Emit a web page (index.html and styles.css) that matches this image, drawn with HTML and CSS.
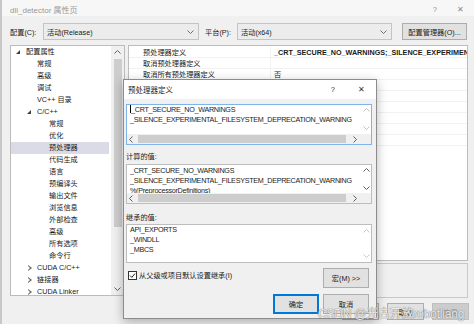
FILE: index.html
```html
<!doctype html>
<html lang="zh-CN">
<head>
  <meta charset="utf-8" />
  <title>dll_detector 属性页</title>
  <link rel="stylesheet" href="styles.css">
</head>
<body>
  <div class="win">
    <div class="titlebar">
      <span class="wtitle">dll_detector 属性页</span>
      <span class="tbtns"><span class="help">?</span><span class="close">✕</span></span>
    </div>

    <div class="cfg">
      <span class="lbl">配置(C):</span>
      <div class="combo c1"><span>活动(Release)</span>
        <svg width="7" height="4" viewBox="0 0 7 4"><path d="M0.5 0.5 L3.5 3.5 L6.5 0.5" fill="none" stroke="#707070"/></svg>
      </div>
      <span class="lbl lbl2">平台(P):</span>
      <div class="combo c2"><span>活动(x64)</span>
        <svg width="7" height="4" viewBox="0 0 7 4"><path d="M0.5 0.5 L3.5 3.5 L6.5 0.5" fill="none" stroke="#707070"/></svg>
      </div>
      <button class="btn mgr" type="button">配置管理器(O)...</button>
    </div>

    <div class="main">
      <div class="tree">
        <ul class="items">
          <li class="l0"><span class="tw open"></span>配置属性</li>
          <li class="l1"><span class="tw"></span>常规</li>
          <li class="l1"><span class="tw"></span>高级</li>
          <li class="l1"><span class="tw"></span>调试</li>
          <li class="l1"><span class="tw"></span>VC++ 目录</li>
          <li class="l1"><span class="tw open"></span>C/C++</li>
          <li class="l2"><span class="tw"></span>常规</li>
          <li class="l2"><span class="tw"></span>优化</li>
          <li class="l2 sel"><span class="tw"></span>预处理器</li>
          <li class="l2"><span class="tw"></span>代码生成</li>
          <li class="l2"><span class="tw"></span>语言</li>
          <li class="l2"><span class="tw"></span>预编译头</li>
          <li class="l2"><span class="tw"></span>输出文件</li>
          <li class="l2"><span class="tw"></span>浏览信息</li>
          <li class="l2"><span class="tw"></span>外部检查</li>
          <li class="l2"><span class="tw"></span>高级</li>
          <li class="l2"><span class="tw"></span>所有选项</li>
          <li class="l2"><span class="tw"></span>命令行</li>
          <li class="l1"><span class="tw shut"></span>CUDA C/C++</li>
          <li class="l1"><span class="tw shut"></span>链接器</li>
          <li class="l1"><span class="tw shut"></span>CUDA Linker</li>
        </ul>
        <div class="vbar">
          <svg width="7" height="4" viewBox="0 0 7 4"><path d="M0.5 3.5 L3.5 0.5 L6.5 3.5" fill="none" stroke="#606060"/></svg>
          <div class="thumb"></div>
          <svg width="7" height="4" viewBox="0 0 7 4"><path d="M0.5 0.5 L3.5 3.5 L6.5 0.5" fill="none" stroke="#606060"/></svg>
        </div>
      </div>

      <div class="right">
        <div class="grid">
          <div class="prow"><span class="pn">预处理器定义</span><span class="pv bold">_CRT_SECURE_NO_WARNINGS;_SILENCE_EXPERIMENTAL_FILESYSTEM_DEPRECATION_WARNING;%(PreprocessorDefinitions)</span></div>
          <div class="prow"><span class="pn">取消预处理器定义</span><span class="pv"></span></div>
          <div class="prow"><span class="pn">取消所有预处理器定义</span><span class="pv">否</span></div>
          <div class="prow"><span class="pn">完整库路径</span><span class="pv">否</span></div>
          <div class="prow"><span class="pn">预处理到文件</span><span class="pv">否</span></div>
          <div class="prow"><span class="pn">预处理取消显示行号</span><span class="pv">否</span></div>
          <div class="prow"><span class="pn">保留注释</span><span class="pv">否</span></div>
          <div class="prow"><span class="pn">忽略标准包含路径</span><span class="pv">否</span></div>
          <div class="prow"><span class="pn">使用标准一致性预处理器</span><span class="pv"></span></div>
        </div>
        <div class="desc"></div>
      </div>
    </div>

    <div class="foot">
      <button class="btn" type="button">确定</button>
      <button class="btn" type="button">取消</button>
      <button class="btn dis" type="button">应用</button>
    </div>
  </div>

  <!-- modal editor over the property page -->
  <div class="dlg">
    <div class="dtitle">
      <span>预处理器定义</span>
      <span class="tbtns"><span class="help">?</span><span class="close">✕</span></span>
    </div>
    <div class="dbody">
      <div class="ebox focus">
        <div class="etext tight"><span class="caret"></span>_CRT_SECURE_NO_WARNINGS<br>_SILENCE_EXPERIMENTAL_FILESYSTEM_DEPRECATION_WARNING</div>
        <div class="vs">
          <svg width="7" height="4" viewBox="0 0 7 4"><path d="M0.5 3.5 L3.5 0.5 L6.5 3.5" fill="none" stroke="#c0c0c0"/></svg>
          <svg width="7" height="4" viewBox="0 0 7 4"><path d="M0.5 0.5 L3.5 3.5 L6.5 0.5" fill="none" stroke="#c0c0c0"/></svg>
        </div>
        <div class="hs">
          <svg width="4" height="7" viewBox="0 0 4 7"><path d="M3.5 0.5 L0.5 3.5 L3.5 6.5" fill="none" stroke="#606060"/></svg>
          <div class="hthumb"></div>
          <svg width="4" height="7" viewBox="0 0 4 7"><path d="M0.5 0.5 L3.5 3.5 L0.5 6.5" fill="none" stroke="#606060"/></svg>
        </div>
        <div class="corner"></div>
      </div>

      <div class="dlabel">计算的值:</div>
      <div class="ebox b2">
        <div class="etext">_CRT_SECURE_NO_WARNINGS<br>_SILENCE_EXPERIMENTAL_FILESYSTEM_DEPRECATION_WARNING<br>%(PreprocessorDefinitions)</div>
        <div class="vs">
          <svg width="7" height="4" viewBox="0 0 7 4"><path d="M0.5 3.5 L3.5 0.5 L6.5 3.5" fill="none" stroke="#606060"/></svg>
          <svg width="7" height="4" viewBox="0 0 7 4"><path d="M0.5 0.5 L3.5 3.5 L6.5 0.5" fill="none" stroke="#606060"/></svg>
        </div>
        <div class="hs">
          <svg width="4" height="7" viewBox="0 0 4 7"><path d="M3.5 0.5 L0.5 3.5 L3.5 6.5" fill="none" stroke="#606060"/></svg>
          <div class="hthumb"></div>
          <svg width="4" height="7" viewBox="0 0 4 7"><path d="M0.5 0.5 L3.5 3.5 L0.5 6.5" fill="none" stroke="#606060"/></svg>
        </div>
        <div class="corner"></div>
      </div>

      <div class="dlabel l2">继承的值:</div>
      <div class="ebox b3">
        <div class="etext tight">API_EXPORTS<br>_WINDLL<br>_MBCS</div>
        <div class="vs">
          <svg width="7" height="4" viewBox="0 0 7 4"><path d="M0.5 3.5 L3.5 0.5 L6.5 3.5" fill="none" stroke="#c8c8c8"/></svg>
          <svg width="7" height="4" viewBox="0 0 7 4"><path d="M0.5 0.5 L3.5 3.5 L6.5 0.5" fill="none" stroke="#c8c8c8"/></svg>
        </div>
      </div>

      <div class="drow">
        <label class="chk"><span class="box">
          <svg width="7" height="7" viewBox="0 0 7 7"><path d="M1 3.6 L2.8 5.4 L6 1.6" fill="none" stroke="#222" stroke-width="1"/></svg>
        </span>从父级或项目默认设置继承(I)</label>
        <button class="btn dbtn" type="button">宏(M) &gt;&gt;</button>
      </div>
      <div class="drow end">
        <button class="btn dbtn ok" type="button">确定</button>
        <button class="btn dbtn" type="button">取消</button>
      </div>
    </div>
  </div>

  <div class="wm">CSDN @光古开放robotliang</div>
</body>
</html>
```

FILE: styles.css
```css
:root{
  --font: "Liberation Sans", "Noto Sans CJK SC", sans-serif;
  --fs: 7.2px;

  --bg: #f0f0f0;
  --line: #adadad;
  --btn: #e1e1e1;
  --thumb: #cdcdcd;
  --sel: #dadbe6;
  --focus: #7eb4ea;
}

*{ box-sizing:border-box }
body{
  margin:0;
  width:474px; height:324px;
  overflow:hidden;
  position:relative;
  background: var(--bg);
  font-family: var(--font);
  font-size: var(--fs);
  color:#1a1a1a;
}
button{ font: inherit; color: inherit; }

/* ===== Main property page ===== */
.win{
  display:flex;
  flex-direction:column;
  height:324px;
  border-left:2px solid #c8c8c8;
}

.titlebar{
  height:16px;
  display:flex;
  align-items:center;
  justify-content:space-between;
  padding:2px 0 0 8px;
  background:#f7f7f7;
  color:#9a9a9a;
  font-size:8px;
}
.tbtns{ display:flex; gap:20px; padding-right:10px; color:#8a8a8a; }
.tbtns .help{ font-size:7.5px; }
.tbtns .close{ font-size:8px; }

.cfg{
  display:flex;
  align-items:center;
  height:17px;
  margin-top:7px;
  padding-left:8px;
}
.lbl{ width:33px; }
.lbl2{ margin-left:6px; width:32px; }
.combo{
  height:17px;
  display:flex;
  align-items:center;
  justify-content:space-between;
  padding:0 4px 0 3px;
  border:1px solid #c4c4c4;
  background:#ececec;
}
.c1{ width:156px; }
.c2{ width:155px; }

.btn{
  border:1px solid var(--line);
  background: var(--btn);
  padding:0;
  height:17px;
}
.mgr{ margin-left:10px; width:65px; }

.main{
  display:flex;
  gap:3px;
  height:253px;
  margin-top:5px;
  padding-left:8px;
}

/* tree */
.tree{
  width:115px;
  height:251px;
  display:flex;
  border:1px solid #bcbcbc;
  background:#fff;
}
.items{
  list-style:none;
  margin:0; padding:0;
  flex:1;
}
.items li{
  display:flex;
  align-items:center;
  height:12px;
  line-height:12px;
  white-space:nowrap;
}
.items .l0{ padding-left:4px; }
.items .l1{ padding-left:15px; }
.items .l2{ padding-left:27px; }
.items .sel{ background: var(--sel); margin-right:2px; }

.tw{ width:11px; height:12px; flex:none; position:relative; }
.tw.open::before{
  content:"";
  position:absolute;
  left:1px; top:4px;
  border-style:solid;
  border-width:0 0 4px 4px;
  border-color:transparent transparent #404040 transparent;
}
.tw.shut::before{
  content:"";
  position:absolute;
  left:2px; top:3px;
  width:0; height:0;
  border-style:solid;
  border-width:3px 0 3px 4px;
  border-color:transparent transparent transparent #606060;
}
.tw.shut::after{
  content:"";
  position:absolute;
  left:2px; top:4px;
  border-style:solid;
  border-width:2px 0 2px 2.6px;
  border-color:transparent transparent transparent #fff;
}

.vbar{
  width:13px;
  display:flex;
  flex-direction:column;
  align-items:center;
  padding:4px 0 4px;
  background:#f0f0f0;
}
.vbar .thumb{
  width:8px;
  height:168px;
  margin:5px 0 auto;
  background: var(--thumb);
}

/* property grid */
.right{
  width:340px;
  display:flex;
  flex-direction:column;
  gap:2px;
}
.grid{
  height:216px;
  border:1px solid #bcbcbc;
  background:#fff;
  padding-top:1px;
}
.prow{
  display:grid;
  grid-template-columns:142px 1fr;
  height:11px;
  line-height:11px;
  border-bottom:1px solid #f2f2f2;
}
.pn{ padding-left:14px; border-right:1px solid #f2f2f2; white-space:nowrap; }
.pv{ padding-left:3px; white-space:nowrap; overflow:hidden; }
.pv.bold{ font-weight:700; }
.desc{
  height:35px;
  border:1px solid #c8c8c8;
  background:#f0f0f0;
}

.foot{
  display:flex;
  justify-content:flex-end;
  gap:8px;
  margin-top:5px;
  padding-right:5px;
}
.foot .btn{ width:37px; height:17px; }
.foot .dis{ background:#cccccc; border-color:#bfbfbf; color:#8a8a8a; }

/* ===== Modal editor (lies over the page) ===== */
.dlg{
  position:absolute;
  left:123px; top:79px;
  width:254px; height:240px;
  border:1px solid #8c8c8c;
  background: var(--bg);
  box-shadow: 0 3px 10px rgba(0,0,0,.28);
}
.dtitle{
  height:19px;
  display:flex;
  align-items:center;
  justify-content:space-between;
  padding-left:4px;
  background:#fff;
  font-size:7.5px;
}
.dtitle .tbtns{ gap:23px; padding-right:11px; color:#333; }

.dbody{ padding:5px 4px 0 2px; }

.ebox{
  display:grid;
  grid-template-columns:1fr 10px;
  grid-template-rows:1fr 10px;
  height:41px;
  border:1px solid #bdbdbd;
  background:#fff;
}
.ebox.focus{ border-color: var(--focus); }
.b2{ height:40px; }
.b3{ height:39px; grid-template-rows:1fr; }

.etext{
  padding:1px 0 0 3px;
  line-height:10px;
  white-space:nowrap;
  overflow:hidden;
  letter-spacing:-0.28px;
}
.etext.tight{ padding-top:0; }
.caret{
  display:inline-block;
  width:1px; height:8px;
  background:#000;
  vertical-align:-1px;
}

.vs{
  display:flex;
  flex-direction:column;
  align-items:center;
  justify-content:space-between;
  padding:3px 0 4px;
}
.b2 .vs{ padding:3px 0 3px; }
.b3 .vs{ padding:4px 0 4px; }
.hs{
  display:flex;
  align-items:center;
  gap:5px;
  padding:0 4px 0 2px;
  background:#f0f0f0;
}
.hthumb{ flex:1; height:8px; background: var(--thumb); margin-right:2px; }
.corner{ background:#f0f0f0; }

.dlabel{
  padding-top:7px;
  line-height:10px;
  margin-bottom:2px;
}
.dlabel.l2{ padding-top:9px; margin-bottom:1px; }

.drow{
  display:flex;
  justify-content:space-between;
  margin-top:5px;
  padding-right:3px;
}
.drow.end{ justify-content:flex-end; gap:4px; margin-top:6px; }
.chk{
  display:flex;
  align-items:center;
  gap:2px;
  margin-top:1px;
  margin-left:2px;
  height:12px;
}
.chk .box{
  width:9px; height:9px;
  border:1px solid #333;
  background:#fff;
  display:grid;
  place-items:center;
}
.dbtn{ width:46px; height:20px; }
.ok{
  border-color:#0078d7;
  box-shadow: inset 0 0 0 1px #0078d7;
}

/* watermark */
.wm{
  position:absolute;
  left:318px; top:304px;
  font-size:12px;
  color:rgba(255,255,255,.85);
  text-shadow: 0 0 1px #7a7a7a, 0 0 1px #7a7a7a;
  white-space:nowrap;
  letter-spacing:-0.2px;
}
```
